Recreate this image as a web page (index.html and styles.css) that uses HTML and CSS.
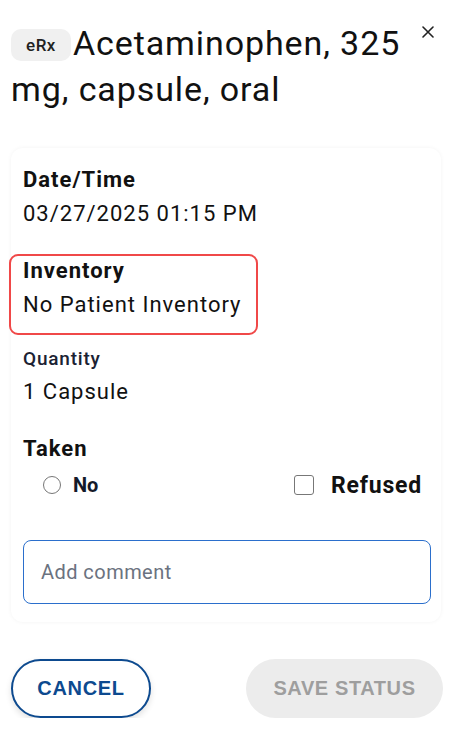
FILE: index.html
```html
<!DOCTYPE html>
<html lang="en">
<head>
<meta charset="utf-8">
<title>Medication status</title>
<link rel="stylesheet" href="styles.css">
</head>
<body>
<div class="page">
  <header class="header">
    <h1 class="title"><span class="badge">eRx</span>Acetaminophen, 325 mg, capsule, oral</h1>
    <button class="close" aria-label="Close">
      <svg width="12" height="12" viewBox="0 0 12 12"><path d="M1 1L11 11M11 1L1 11" stroke="#222" stroke-width="1.6" stroke-linecap="round"/></svg>
    </button>
  </header>

  <section class="card">
    <div class="field">
      <div class="label">Date/Time</div>
      <div class="value">03/27/2025 01:15 PM</div>
    </div>
    <div class="field highlight">
      <div class="label">Inventory</div>
      <div class="value">No Patient Inventory</div>
    </div>
    <div class="field qty">
      <div class="label small">Quantity</div>
      <div class="value">1 Capsule</div>
    </div>
    <div class="taken">
      <div class="label">Taken</div>
      <div class="options">
        <label class="opt radio-opt"><span class="radio"></span><span class="opt-text">No</span></label>
        <label class="opt check-opt"><span class="checkbox"></span><span class="opt-text big">Refused</span></label>
      </div>
    </div>
    <div class="comment"><span class="placeholder">Add comment</span></div>
  </section>

  <footer class="actions">
    <button class="btn cancel">CANCEL</button>
    <button class="btn save">SAVE STATUS</button>
  </footer>
</div>
</body>
</html>
```

FILE: styles.css
```css
* { box-sizing: border-box; }
html, body { margin: 0; padding: 0; background: #fff; }
body { font-family: Roboto, "Noto Sans", Arial, sans-serif; color: #111; }

.page { width: 451px; padding: 20px 8px 0 11px; }

.header { display: flex; align-items: flex-start; }
.title {
  flex: 1;
  margin: 0;
  font-size: 34px;
  font-weight: 400;
  line-height: 46px;
  letter-spacing: 0.9px;
  color: #111;
  padding-right: 8px;
}
.badge {
  display: inline-block;
  vertical-align: 4px;
  background: #f0f0f0;
  border-radius: 10px;
  width: 60px;
  height: 32px;
  line-height: 32px;
  text-align: center;
  font-size: 17px;
  font-weight: 500;
  letter-spacing: 0.5px;
  color: #222;
  margin-right: 2px;
}
.close {
  background: none;
  border: 0;
  padding: 0;
  margin: 5px 8px 0 0;
  width: 14px;
  height: 14px;
  display: flex;
  align-items: center;
  justify-content: center;
}

.card {
  margin-top: 36px;
  width: 430px;
  border-radius: 12px;
  box-shadow: 0 0 4px rgba(0,0,0,0.05);
  padding: 17px 10px 18px 12px;
}

.label { font-size: 22px; font-weight: 700; line-height: 30px; letter-spacing: 1px; color: #111; }
.label.small { font-size: 19px; font-weight: 500; line-height: 28px; letter-spacing: 0.8px; color: #1b2233; }
.value { font-size: 22px; line-height: 38px; letter-spacing: 1px; color: #111; }

.highlight {
  margin: 21px 0 0 -14px;
  width: 249px;
  border: 2px solid #f04848;
  border-radius: 9px;
  padding: 0 12px 9px 12px;
}
.qty { margin-top: 10px; }

.taken { margin-top: 23px; }
.options {
  margin-top: 6px;
  display: flex;
  justify-content: space-between;
  align-items: center;
  padding: 0 9px 0 20px;
  height: 30px;
}
.opt { display: flex; align-items: center; }
.radio {
  width: 18px; height: 18px;
  border: 1.5px solid #777;
  border-radius: 50%;
  margin-right: 12px;
}
.checkbox {
  width: 20px; height: 20px;
  border: 1.5px solid #777;
  border-radius: 3px;
  margin-right: 17px;
}
.opt-text { font-size: 20px; font-weight: 700; color: #141a2a; }
.opt-text.big { font-size: 23px; letter-spacing: 0.8px; color: #111; }

.comment {
  margin-top: 40px;
  height: 64px;
  border: 1.5px solid #2b6fcc;
  border-radius: 8px;
  display: flex;
  align-items: center;
  padding-left: 17px;
}
.placeholder { font-size: 20px; letter-spacing: 0.45px; color: #6b7280; }

.actions {
  margin-top: 37px;
  display: flex;
  justify-content: space-between;
}
.btn {
  height: 59px;
  border-radius: 30px;
  font-family: "Liberation Sans", Arial, sans-serif;
  font-weight: 700;
  font-size: 20px;
  letter-spacing: 0.7px;
  padding: 0;
}
.cancel {
  width: 140px;
  background: #fff;
  border: 2.5px solid #0d4a8f;
  color: #0d4a8f;
  box-shadow: 0 3px 6px rgba(0,0,0,0.12);
}
.save {
  width: 197px;
  background: #ececec;
  border: 0;
  color: #9e9e9e;
  letter-spacing: 0.6px;
}
```
